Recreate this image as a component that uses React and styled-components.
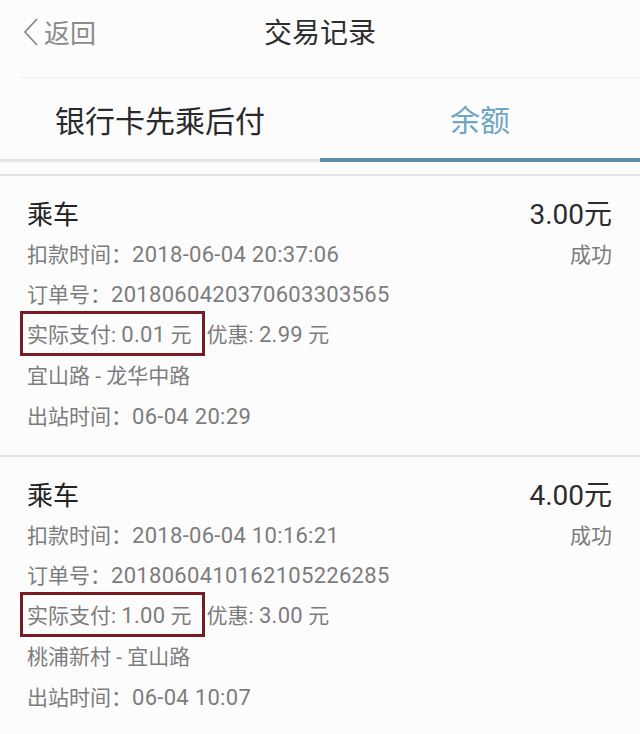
import React from 'react';
import styled, { createGlobalStyle } from 'styled-components';

const GlobalStyle = createGlobalStyle`
  body {
    margin: 0;
    background: #fdfcfd;
    font-family: Roboto, "Noto Sans CJK SC", sans-serif;
  }
`;

const Page = styled.div`
  width: 640px;
  min-height: 734px;
  background: #fdfcfd;
`;

const Header = styled.div`
  position: relative;
  display: flex;
  align-items: center;
  justify-content: center;
  height: 77px;
  margin-left: 20px;
  border-bottom: 1px solid #efedef;
`;

const Back = styled.div`
  position: absolute;
  left: 2px;
  top: 13px;
  display: flex;
  align-items: center;
  gap: 4px;
  color: #8a8a8a;
  font-size: 26px;
  font-family: "Noto Sans CJK SC", sans-serif;
`;

const Title = styled.h1`
  margin: 0 0 16px -20px;
  font-size: 28px;
  font-weight: normal;
  color: #2e2e2e;
  font-family: "Noto Sans CJK SC", sans-serif;
`;

const Tabs = styled.div`
  display: grid;
  grid-template-columns: 1fr 1fr;
  margin-bottom: 12px;
`;

const Tab = styled.div`
  height: 84px;
  display: flex;
  align-items: center;
  justify-content: center;
  box-sizing: border-box;
  font-size: 30px;
  font-family: "Noto Sans CJK SC", sans-serif;
  color: ${(p) => (p.active ? '#6ea6c0' : '#2a2a2a')};
  border-bottom: ${(p) => (p.active ? '4px solid #5f8fa8' : '3px solid #e6e4e6')};
`;

const List = styled.div`
  border-top: 2px solid #e4e2e4;
`;

const Card = styled.div`
  padding: 16px 28px 20px 27px;
  & + & {
    border-top: 2px solid #e6e4e6;
  }
`;

const Row = styled.div`
  display: flex;
  justify-content: space-between;
  align-items: center;
  height: 40.5px;
  font-size: 21px;
  color: #7c7c7c;
  white-space: nowrap;
`;

// digits in the rows run a touch wider than the labels
const Num = styled.span`
  font-size: 22px;
  letter-spacing: 0.3px;
`;

const Name = styled.span`
  font-size: 26px;
  color: #222;
  font-family: "Noto Sans CJK SC", sans-serif;
`;

const Amount = styled.span`
  font-size: 28px;
  color: #2c2c2c;
`;

const Highlight = styled.span`
  display: inline-block;
  line-height: 27px;
  padding: 3px 6px 0 0;
  margin-right: 9px;
  outline: 3px solid #7a1a22;
  outline-offset: 4px;
`;

function BackIcon() {
  return (
    <svg width="18" height="30" viewBox="0 0 18 30">
      <path d="M15 2 L3 15 L15 28" fill="none" stroke="#8a8a8a" strokeWidth="1.8" />
    </svg>
  );
}

const records = [
  {
    amount: '3.00元',
    time: '2018-06-04 20:37:06',
    order: '2018060420370603303565',
    paid: '0.01',
    discount: '2.99',
    route: '宜山路 - 龙华中路',
    exit: '06-04 20:29',
  },
  {
    amount: '4.00元',
    time: '2018-06-04 10:16:21',
    order: '2018060410162105226285',
    paid: '1.00',
    discount: '3.00',
    route: '桃浦新村 - 宜山路',
    exit: '06-04 10:07',
  },
];

export default function App() {
  return (
    <Page>
      <GlobalStyle />
      <Header>
        <Back>
          <BackIcon />
          返回
        </Back>
        <Title>交易记录</Title>
      </Header>
      <Tabs>
        <Tab>银行卡先乘后付</Tab>
        <Tab active>余额</Tab>
      </Tabs>
      <List>
        {records.map((r) => (
          <Card key={r.time}>
            <Row>
              <Name>乘车</Name>
              <Amount>{r.amount}</Amount>
            </Row>
            <Row>
              <span>扣款时间：<Num>{r.time}</Num></span>
              <span>成功</span>
            </Row>
            <Row>
              <span>订单号：<Num>{r.order}</Num></span>
            </Row>
            <Row>
              <span>
                <Highlight>实际支付: <Num>{r.paid}</Num> 元</Highlight>
                优惠: <Num>{r.discount}</Num> 元
              </span>
            </Row>
            <Row>
              <span>{r.route}</span>
            </Row>
            <Row>
              <span>出站时间：<Num>{r.exit}</Num></span>
            </Row>
          </Card>
        ))}
      </List>
    </Page>
  );
}
